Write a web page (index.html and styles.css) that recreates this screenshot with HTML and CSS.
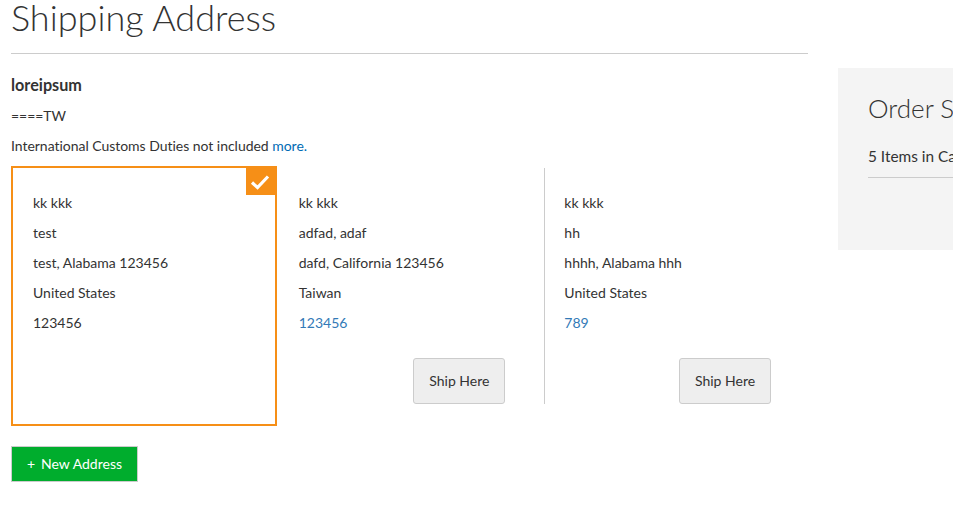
FILE: index.html
```html
<!DOCTYPE html>
<html lang="en">
<head>
    <meta charset="UTF-8">
    <title>Shipping Address</title>
    <link rel="stylesheet" href="styles.css">
</head>
<body>
    <div class="page">
        <main class="shipping">
            <h1 class="step-title">Shipping Address</h1>
            <p class="customer-name">loreipsum</p>
            <p class="note">====TW</p>
            <p class="note">International Customs Duties not included <a href="#">more.</a></p>

            <div class="address-list">
                <div class="address-item selected">
                    <span class="check-badge">
                        <svg width="20" height="16" viewBox="0 0 20 16"><path d="M2 8.5l5.5 5L18 2.5" fill="none" stroke="#fff" stroke-width="3.2"/></svg>
                    </span>
                    <p>kk kkk</p>
                    <p>test</p>
                    <p>test, Alabama 123456</p>
                    <p>United States</p>
                    <p>123456</p>
                </div>
                <div class="address-item">
                    <p>kk kkk</p>
                    <p>adfad, adaf</p>
                    <p>dafd, California 123456</p>
                    <p>Taiwan</p>
                    <p><a class="phone" href="#">123456</a></p>
                    <button class="ship-btn">Ship Here</button>
                </div>
                <div class="address-item divided">
                    <p>kk kkk</p>
                    <p>hh</p>
                    <p>hhhh, Alabama hhh</p>
                    <p>United States</p>
                    <p><a class="phone" href="#">789</a></p>
                    <button class="ship-btn">Ship Here</button>
                </div>
            </div>

            <button class="new-address"><span class="plus">+</span>New Address</button>
        </main>

        <aside class="summary">
            <h2 class="summary-title">Order Summary</h2>
            <div class="items-count">5 Items in Cart</div>
        </aside>
    </div>
</body>
</html>
```

FILE: styles.css
```css
html, body {
    margin: 0;
    height: 506px;
    overflow: hidden;
    background: #fff;
}

body {
    font-family: Lato, "Open Sans", sans-serif;
    font-size: 14px;
    line-height: 20px;
    color: #333;
}

.page {
    display: flex;
    align-items: flex-start;
    width: 1300px;
    padding-left: 11px;
}

.shipping {
    width: 797px;
    flex-shrink: 0;
}

.step-title {
    margin: 0 0 21px;
    padding-bottom: 11px;
    height: 42px;
    border-bottom: 1px solid #ccc;
    font-size: 36px;
    line-height: 34px;
    font-weight: 300;
}

.customer-name {
    margin: 0 0 11px;
    font-size: 16.2px;
    font-weight: 700;
}

.note {
    margin: 0 0 10px;
    letter-spacing: -0.03px;
}

a {
    color: #006bb4;
    text-decoration: none;
}

.address-list {
    display: flex;
    align-items: flex-start;
    margin-bottom: 20px;
}

.address-item {
    position: relative;
    box-sizing: border-box;
    width: 266px;
    height: 260px;
    padding: 25px 20px 0 20px;
    border: 2px solid transparent;
}

.address-item p {
    margin: 0 0 10px;
}

.address-item.selected {
    border-color: #f68f17;
}

.address-item.divided::before {
    content: "";
    position: absolute;
    left: 0;
    top: 0;
    height: 236px;
    border-left: 1px solid #ccc;
}

.check-badge {
    position: absolute;
    top: 0;
    right: 0;
    display: flex;
    align-items: center;
    justify-content: center;
    width: 29px;
    height: 27px;
    background: #f68f17;
}

.phone {
    color: #337ab7;
}

.ship-btn {
    position: absolute;
    right: 35px;
    top: 190px;
    width: 92px;
    height: 46px;
    border: 1px solid #ccc;
    border-radius: 3px;
    background: #eee;
    color: #333;
    font: 14px/20px Lato, sans-serif;
}

.new-address {
    display: block;
    width: 127px;
    height: 36px;
    padding: 0;
    border: 1px solid #ccc;
    background: #00ad2d;
    color: #fff;
    font: 14px/20px Lato, sans-serif;
}

.plus {
    margin-right: 6px;
}

.summary {
    box-sizing: border-box;
    flex-shrink: 0;
    width: 300px;
    height: 182px;
    margin: 68px 0 0 30px;
    padding: 21px 30px;
    background: #f4f4f4;
}

.summary-title {
    margin: 0 0 17px;
    font-size: 26px;
    line-height: 38px;
    font-weight: 300;
}

.items-count {
    padding-bottom: 9px;
    border-bottom: 1px solid #ccc;
    font-size: 15.4px;
    line-height: 24px;
}
```
